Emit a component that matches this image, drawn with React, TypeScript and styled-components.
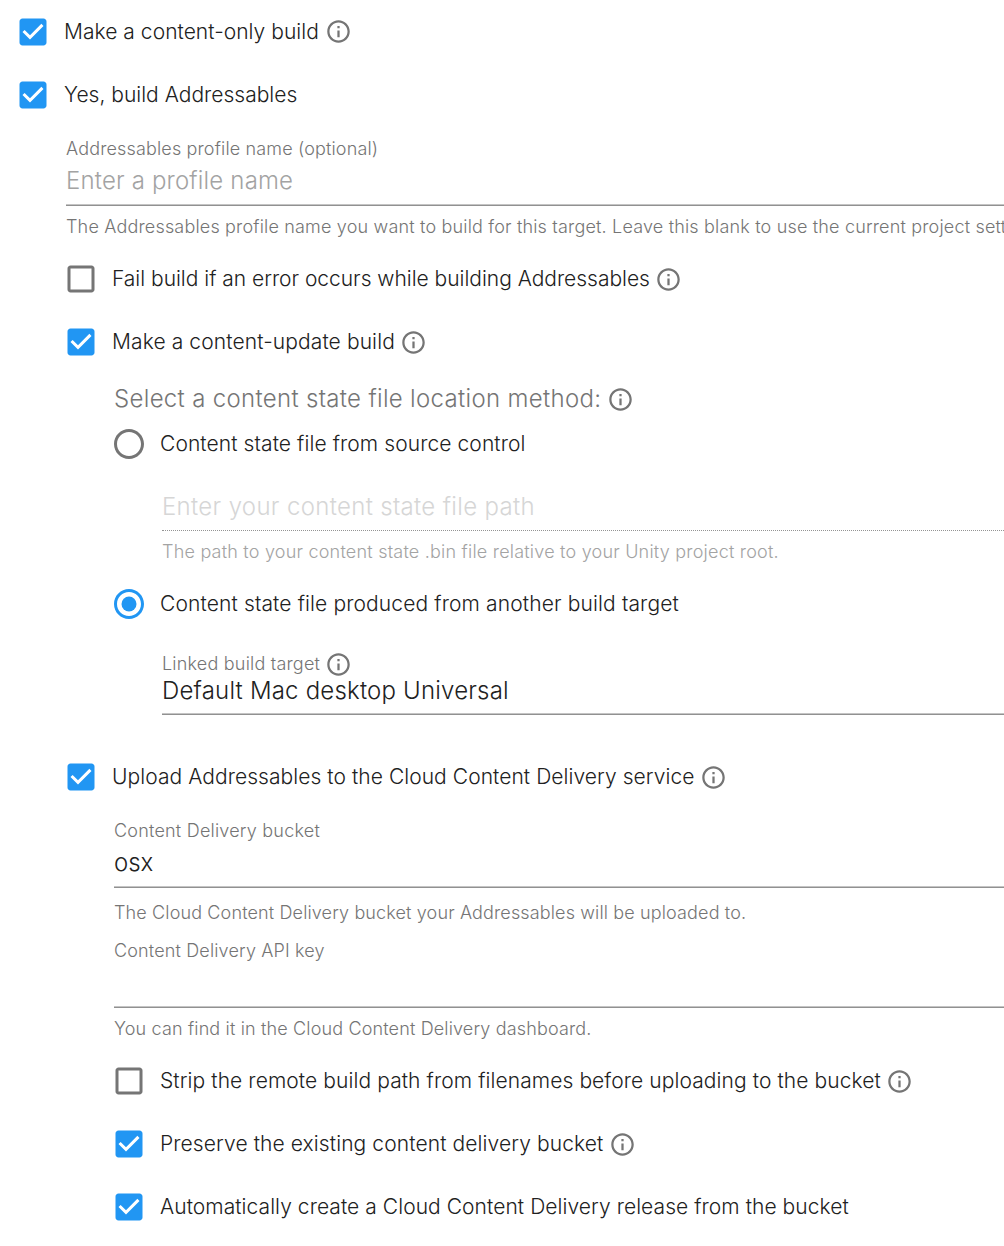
import React from 'react';
import styled, { createGlobalStyle } from 'styled-components';

const Global = createGlobalStyle`
  * { box-sizing: border-box; }
  body {
    margin: 0; background: #fff; overflow: hidden;
    font-family: Inter, "Liberation Sans", sans-serif;
    font-optical-sizing: none;
  }
`;

const Page = styled.main`
  width: 1004px; height: 1246px; overflow: hidden;
  display: flex; flex-direction: column; background: #fff;
`;
const Indent = styled.div<{ $x: number }>`
  padding-left: ${p => p.$x}px;
`;
const Row = styled.label<{ $x: number; $h?: number; $mt?: number }>`
  display: flex; align-items: center; flex: none;
  height: ${p => p.$h ?? 63}px; padding-left: ${p => p.$x}px; margin-top: ${p => p.$mt ?? 0}px;
`;
const Label = styled.span<{ $ls?: number; $gap?: number }>`
  font-size: 21px; line-height: 24px; color: #212121; white-space: nowrap; font-weight: 300;
  margin-left: ${p => p.$gap ?? 13}px; letter-spacing: ${p => p.$ls ?? 0.06}px;
`;
const Heading = styled(Label)`
  font-size: 24px; color: #757575;
`;
const Svg = styled.svg<{ $gap?: number }>`
  display: block; flex: none; margin-left: ${p => p.$gap ?? 0}px;
`;
const Field = styled.div<{ $h: number; $top?: number; $disabled?: boolean }>`
  height: ${p => p.$h}px; padding-top: ${p => p.$top ?? 0}px;
  border-bottom: 1px ${p => (p.$disabled ? 'dotted #949494' : 'solid #919191')};
  box-shadow: ${p => (p.$disabled ? 'none' : 'inset 0 -1px #c4c4c4')};
  display: flex; flex-direction: column; align-items: flex-start;
`;
const Small = styled.div<{ $ls?: number; $c?: string; $top?: number }>`
  display: flex; align-items: center;
  font-size: 18px; line-height: 22px; height: 22px; color: ${p => p.$c ?? '#757575'}; white-space: nowrap;
  font-weight: 300; letter-spacing: ${p => p.$ls ?? 0.15}px; margin-top: ${p => p.$top ?? 0}px;
`;
const Value = styled.div<{ $ls?: number; $c?: string; $top?: number }>`
  font-size: 24px; line-height: 30px; color: ${p => p.$c ?? '#212121'}; white-space: nowrap;
  font-weight: 300; letter-spacing: ${p => p.$ls ?? 0.2}px; margin-top: ${p => p.$top ?? 0}px;
`;
const Box = ({ on = false }: { on?: boolean }) => (
  <Svg width="36" height="36" viewBox="0 0 24 24">
    {on
      ? <path fill="#2196f3" d="M19 3H5c-1.11 0-2 .9-2 2v14c0 1.1.89 2 2 2h14c1.11 0 2-.9 2-2V5c0-1.1-.9-2-2-2zm-9 14l-5-5 1.41-1.41L10 14.17l7.59-7.59L19 8l-9 9z" />
      : <path fill="#757575" d="M19 5v14H5V5h14m0-2H5c-1.1 0-2 .9-2 2v14c0 1.1.9 2 2 2h14c1.1 0 2-.9 2-2V5c0-1.1-.9-2-2-2z" />}
  </Svg>
);
const Radio = ({ on = false }: { on?: boolean }) => (
  <Svg width="36" height="36" viewBox="0 0 24 24" fill={on ? '#2196f3' : '#757575'}>
    <path d="M12 2C6.48 2 2 6.48 2 12s4.48 10 10 10 10-4.48 10-10S17.52 2 12 2zm0 18c-4.42 0-8-3.58-8-8s3.58-8 8-8 8 3.58 8 8-3.58 8-8 8z" />
    {on && <circle cx="12" cy="12" r="5" />}
  </Svg>
);
const Info = ({ gap = 5.5 }: { gap?: number }) => (
  <Svg $gap={gap} width="27" height="27" viewBox="0 0 24 24" fill="#757575">
    <path d="M11 7h2v2h-2zm0 4h2v6h-2zm1-9C6.48 2 2 6.48 2 12s4.48 10 10 10 10-4.48 10-10S17.52 2 12 2zm0 18c-4.41 0-8-3.59-8-8s3.59-8 8-8 8 3.59 8 8-3.59 8-8 8z" />
  </Svg>
);

export default function App() {
  return (
    <Page>
      <Global />
      <Row $x={15}><Box on /><Label $ls={0.04}>Make a content-only build</Label><Info gap={6} /></Row>
      <Row $x={15}><Box on /><Label $ls={0.01}>Yes, build Addressables</Label></Row>
      <Indent $x={66}>
        <Field $h={80} $top={12}>
          <Small>Addressables profile name (optional)</Small>
          <Value $c="#a3a3a3" $top={6} $ls={0.17}>Enter a profile name</Value>
        </Field>
        <Small $top={10} $ls={0.175}>The Addressables profile name you want to build for this target. Leave this blank to use the current project settings.</Small>
      </Indent>
      <Row $x={63} $h={82}><Box /><Label $ls={-0.02}>Fail build if an error occurs while building Addressables</Label><Info /></Row>
      <Row $x={63} $h={44}><Box on /><Label $ls={0.11}>Make a content-update build</Label><Info /></Row>
      <Row $x={114} $h={70}><Heading $gap={0} $ls={0.32}>Select a content state file location method:</Heading><Info /></Row>
      <Row $x={111} $h={20}><Radio /><Label $ls={0.09}>Content state file from source control</Label></Row>
      <Indent $x={162}>
        <Field $h={77} $top={38} $disabled><Value $c="#d6d6d6" $ls={0.33}>Enter your content state file path</Value></Field>
        <Small $top={10} $c="#a3a3a3" $ls={0.21}>The path to your content state .bin file relative to your Unity project root.</Small>
      </Indent>
      <Row $x={111} $h={82}><Radio on /><Label $ls={0.13}>Content state file produced from another build target</Label></Row>
      <Indent $x={162}>
        <Field $h={70} $top={8}><Small $ls={0.2}>Linked build target<Info gap={4.5} /></Small><Value $top={1}>Default Mac desktop Universal</Value></Field>
      </Indent>
      <Row $x={63} $h={62} $mt={31}><Box on /><Label $ls={0.06}>Upload Addressables to the Cloud Content Delivery service</Label><Info /></Row>
      <Indent $x={114}>
        <Field $h={80} $top={12}><Small $ls={0.21}>Content Delivery bucket</Small><Value $top={6} $ls={0}>osx</Value></Field>
        <Small $top={14} $ls={0.135}>The Cloud Content Delivery bucket your Addressables will be uploaded to.</Small>
        <Field $h={84} $top={16}><Small>Content Delivery API key</Small></Field>
        <Small $top={10}>You can find it in the Cloud Content Delivery dashboard.</Small>
      </Indent>
      <Row $x={111} $h={82}><Box /><Label $ls={0.09}>Strip the remote build path from filenames before uploading to the bucket</Label><Info /></Row>
      <Row $x={111} $h={44}><Box on /><Label $ls={0.1}>Preserve the existing content delivery bucket</Label><Info /></Row>
      <Row $x={111} $h={82}><Box on /><Label $ls={0.06}>Automatically create a Cloud Content Delivery release from the bucket</Label></Row>
    </Page>
  );
}
